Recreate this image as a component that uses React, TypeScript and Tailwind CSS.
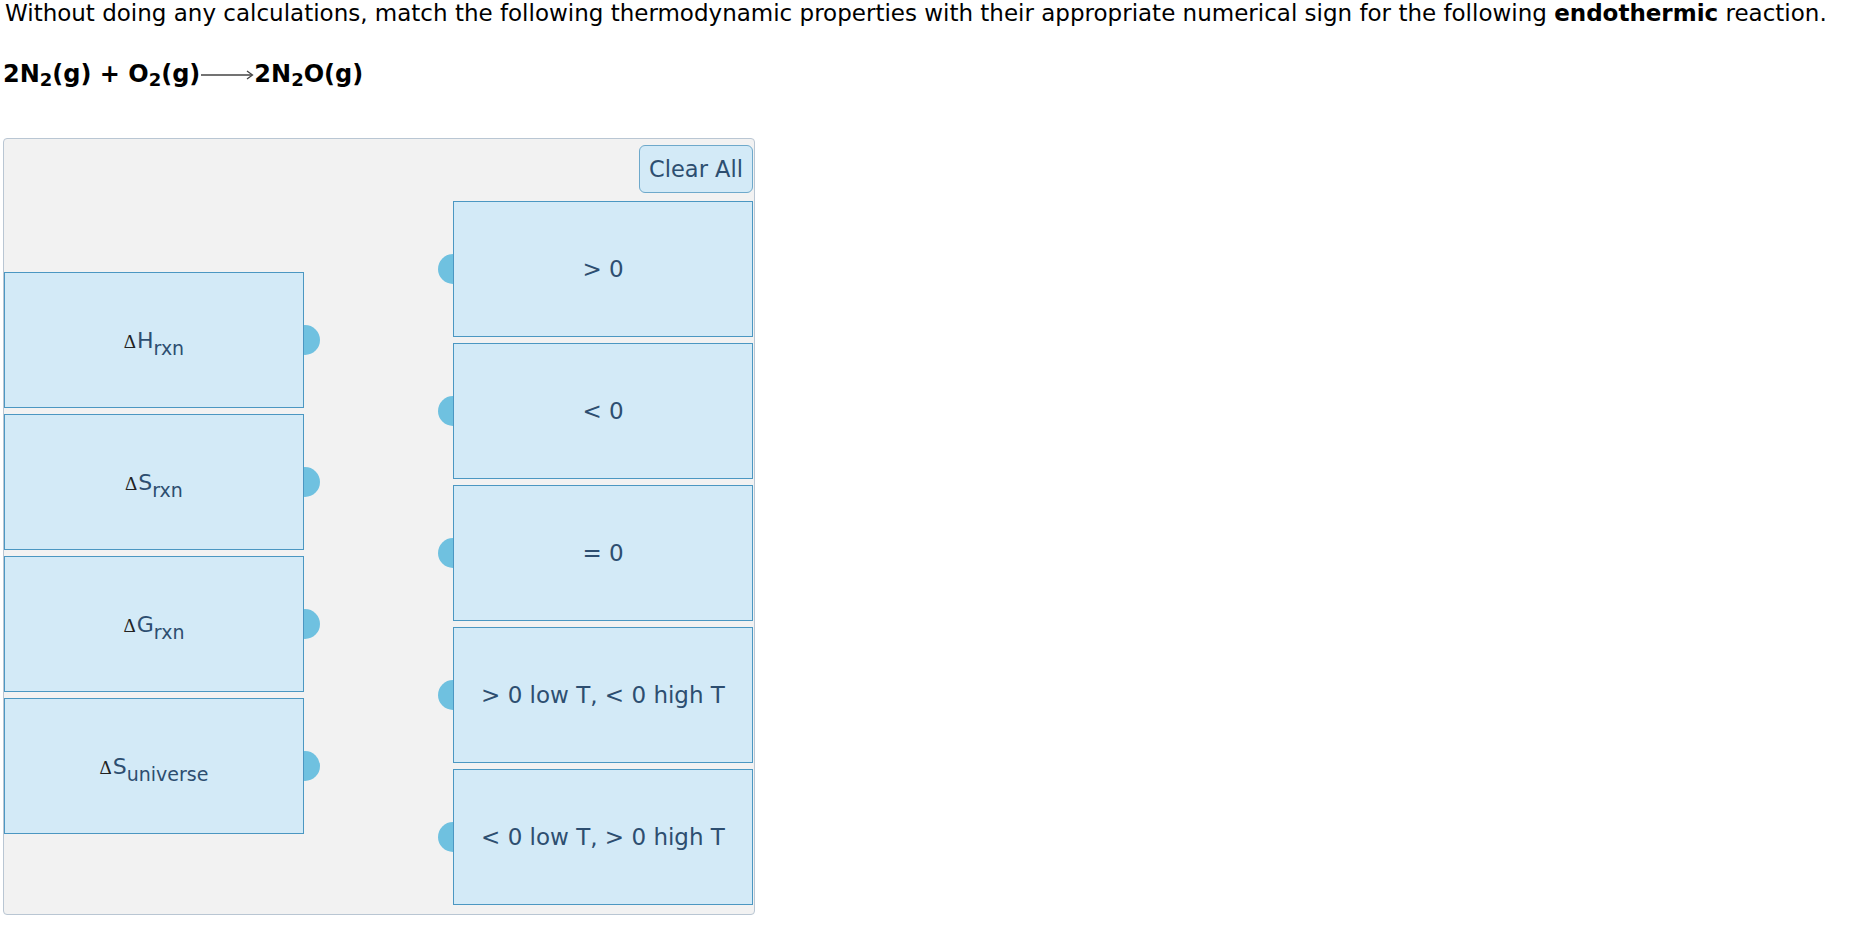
import React from "react";

const verdana = { fontFamily: '"DejaVu Sans", Verdana, sans-serif' };

type Label = { main: string; sub: string };

const leftItems: Label[] = [
  { main: "H", sub: "rxn" },
  { main: "S", sub: "rxn" },
  { main: "G", sub: "rxn" },
  { main: "S", sub: "universe" },
];

const rightItems = ["> 0", "< 0", "= 0", "> 0 low T, < 0 high T", "< 0 low T, > 0 high T"];

function Delta() {
  return (
    <span
      className="text-[19px] text-[#222] mr-[1px]"
      style={{ fontFamily: '"Liberation Serif", "Times New Roman", serif' }}
    >
      Δ
    </span>
  );
}

function LongArrow() {
  return (
    <svg width="54" height="14" viewBox="0 0 54 14" className="inline-block align-middle">
      <line x1="1" y1="7" x2="52" y2="7" stroke="#444" strokeWidth="1.3" />
      <path d="M47 3 L52.5 7 L47 11" fill="none" stroke="#444" strokeWidth="1.3" />
    </svg>
  );
}

function LeftCard({ item }: { item: Label }) {
  return (
    <div className="relative w-[300px] h-[136px]">
      <div className="absolute right-[-16px] top-1/2 -translate-y-1/2 w-[30px] h-[30px] rounded-full bg-[#6fc1e0]" />
      <div className="relative w-full h-full border border-[#4b97c2] bg-[#d3eaf7] flex items-center justify-center text-[#2d4e70]">
        <span className="flex items-baseline">
          <Delta />
          <span className="text-[22px]">{item.main}</span>
          <span className="text-[19px] relative top-[7px]">{item.sub}</span>
        </span>
      </div>
    </div>
  );
}

function RightCard({ text }: { text: string }) {
  return (
    <div className="relative w-[300px] h-[136px]">
      <div className="absolute left-[-15px] top-1/2 -translate-y-1/2 w-[30px] h-[30px] rounded-full bg-[#6fc1e0]" />
      <div className="relative w-full h-full border border-[#4b97c2] bg-[#d3eaf7] flex items-center justify-center text-[23px] text-[#2d4e70] whitespace-pre">
        {text}
      </div>
    </div>
  );
}

function Sub({ children }: { children: React.ReactNode }) {
  return <sub className="text-[18px] relative top-[4px] align-baseline">{children}</sub>;
}

export default function App() {
  return (
    <div className="bg-white min-h-screen text-black" style={verdana}>
      <p className="pl-[5px] text-[23px] leading-[26px] whitespace-nowrap">
        Without doing any calculations, match the following thermodynamic properties with their appropriate numerical
        sign for the following <b>endothermic</b> reaction.
      </p>
      <p className="pl-[3px] mt-[34px] text-[24px] leading-[28px] font-bold whitespace-nowrap">
        2N<Sub>2</Sub>(g) + O<Sub>2</Sub>(g)
        <LongArrow />
        2N<Sub>2</Sub>O(g)
      </p>

      <div className="ml-[3px] mt-[50px] w-[752px] h-[777px] border border-[#b9c6d3] rounded-[4px] bg-[#f2f2f2] flex flex-col">
        <div className="flex justify-end pt-[6px] pr-[1px]">
          <button className="w-[114px] h-[48px] rounded-[6px] border border-[#6ea9cb] bg-[#d3eaf7] text-[22.5px] text-[#2d4e70] leading-none">
            Clear All
          </button>
        </div>
        <div className="flex justify-between mt-[8px]">
          <div className="flex flex-col gap-[6px] mt-[71px]">
            {leftItems.map((it, i) => (
              <LeftCard key={i} item={it} />
            ))}
          </div>
          <div className="flex flex-col gap-[6px] mr-[1px]">
            {rightItems.map((t, i) => (
              <RightCard key={i} text={t} />
            ))}
          </div>
        </div>
      </div>
    </div>
  );
}
